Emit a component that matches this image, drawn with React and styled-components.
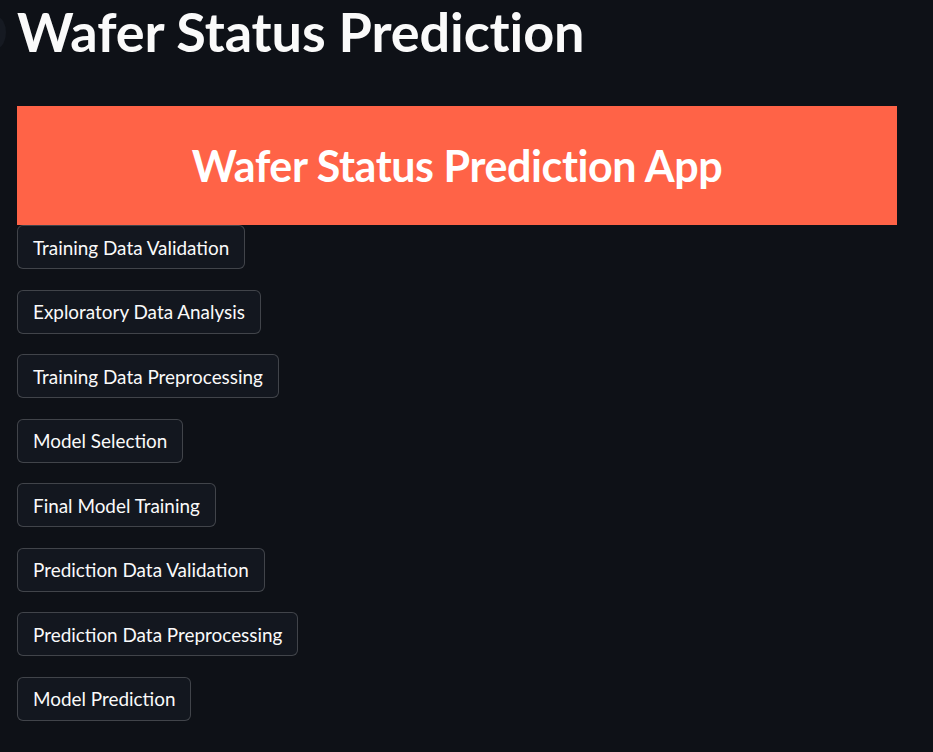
import React from "react";
import styled, { createGlobalStyle } from "styled-components";

const GlobalStyle = createGlobalStyle`
  html, body {
    margin: 0;
    padding: 0;
    background: #0e1117;
    font-family: Lato, "Liberation Sans", sans-serif;
    color: #fafafa;
  }
`;

const steps = [
  "Training Data Validation",
  "Exploratory Data Analysis",
  "Training Data Preprocessing",
  "Model Selection",
  "Final Model Training",
  "Prediction Data Validation",
  "Prediction Data Preprocessing",
  "Model Prediction",
];

const App = () => {
  return (
    <>
      <GlobalStyle />
      <Page>
        <AnchorDot />
        <Title>Wafer Status Prediction</Title>
        <Banner>
          <BannerText>Wafer Status Prediction App</BannerText>
        </Banner>
        <ButtonList>
          {steps.map((label) => (
            <div key={label}>
              <StepButton>{label}</StepButton>
            </div>
          ))}
        </ButtonList>
      </Page>
    </>
  );
};

export default App;

const Page = styled.main`
  position: relative;
  width: 933px;
  height: 752px;
  overflow: hidden;
  box-sizing: border-box;
  padding: 1px 36px 0 17px;
`;

const AnchorDot = styled.span`
  position: absolute;
  left: -12px;
  top: 17px;
  width: 18px;
  height: 31px;
  border-radius: 50%;
  background: #161a22;
`;

const Title = styled.h1`
  margin: 0;
  font-size: 54px;
  font-weight: 700;
  line-height: 62px;
  letter-spacing: -0.1px;
  color: #fafafa;
`;

const Banner = styled.div`
  margin-top: 43px;
  height: 119px;
  background: #ff6347;
  display: flex;
  align-items: center;
  justify-content: center;
`;

const BannerText = styled.h2`
  margin: 0;
  font-size: 43px;
  font-weight: 700;
  color: #ffffff;
  letter-spacing: -0.4px;
`;

const ButtonList = styled.div`
  display: flex;
  flex-direction: column;
  gap: 20.5px;
`;

const StepButton = styled.button`
  height: 44px;
  padding: 0 15px;
  box-sizing: border-box;
  display: inline-flex;
  align-items: center;
  background: #13171f;
  border: 1px solid rgba(250, 250, 250, 0.2);
  border-radius: 6px;
  color: #fafafa;
  font-family: Lato, "Liberation Sans", sans-serif;
  font-size: 18.9px;
  cursor: pointer;
`;
